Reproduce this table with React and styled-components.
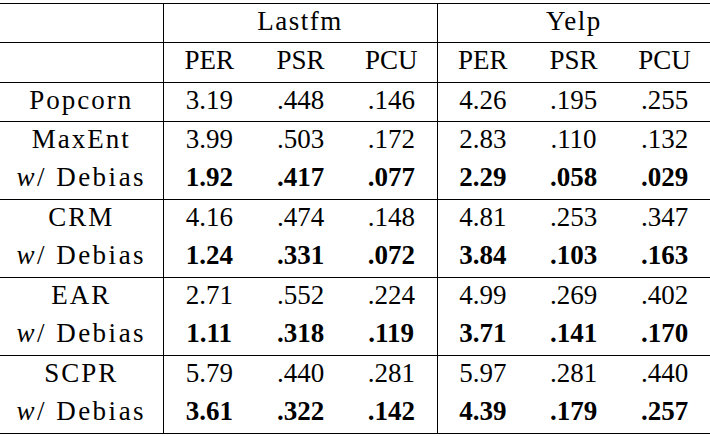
import React from 'react';
import styled, { createGlobalStyle } from 'styled-components';

const GlobalStyle = createGlobalStyle`
  html, body {
    margin: 0;
    padding: 0;
    background: #fff;
  }
`;

const Page = styled.div`
  width: 710px;
  height: 436px;
  padding-top: 3px;
  box-sizing: border-box;
  background: #fff;
`;

const Table = styled.table`
  width: 710px;
  border-collapse: collapse;
  table-layout: fixed;
  font-family: "Liberation Serif", "DejaVu Serif", serif;
  font-size: 27px;
  color: #000;
`;

const Row = styled.tr`
  height: ${(p) => p.$h || 39}px;
  border-top: ${(p) => (p.$rule ? '1px solid #000' : 'none')};
  &:last-child {
    border-bottom: 1px solid #000;
  }
`;

const Cell = styled.td`
  padding: 0 0 4px 0;
  text-align: center;
  vertical-align: middle;
  white-space: nowrap;
  font-weight: ${(p) => (p.$bold ? 700 : 400)};
  border-right: ${(p) => (p.$sep ? '1px solid #000' : 'none')};
`;

const Label = styled(Cell)`
  letter-spacing: ${(p) => (p.$wide ? 2.5 : 2)}px;
`;

const Dataset = styled(Cell)`
  letter-spacing: 1.5px;
`;

const Em = styled.i`
  font-style: italic;
`;

const rows = [
  { name: 'Popcorn', vals: ['3.19', '.448', '.146', '4.26', '.195', '.255'], rule: true },
  { name: 'MaxEnt', vals: ['3.99', '.503', '.172', '2.83', '.110', '.132'], rule: true },
  { debias: true, vals: ['1.92', '.417', '.077', '2.29', '.058', '.029'] },
  { name: 'CRM', vals: ['4.16', '.474', '.148', '4.81', '.253', '.347'], rule: true },
  { debias: true, vals: ['1.24', '.331', '.072', '3.84', '.103', '.163'] },
  { name: 'EAR', vals: ['2.71', '.552', '.224', '4.99', '.269', '.402'], rule: true },
  { debias: true, vals: ['1.11', '.318', '.119', '3.71', '.141', '.170'] },
  { name: 'SCPR', vals: ['5.79', '.440', '.281', '5.97', '.281', '.440'], rule: true },
  { debias: true, vals: ['3.61', '.322', '.142', '4.39', '.179', '.257'] },
];

const metrics = ['PER', 'PSR', 'PCU'];

export default function App() {
  return (
    <Page>
      <GlobalStyle />
      <Table>
        <colgroup>
          <col style={{ width: 163 }} />
          <col style={{ width: 92 }} />
          <col style={{ width: 91 }} />
          <col style={{ width: 91 }} />
          <col style={{ width: 91 }} />
          <col style={{ width: 91 }} />
          <col style={{ width: 91 }} />
        </colgroup>
        <tbody>
          <Row $rule>
            <Cell $sep />
            <Dataset colSpan={3} $sep>Lastfm</Dataset>
            <Dataset colSpan={3}>Yelp</Dataset>
          </Row>
          <Row $rule $h={40}>
            <Cell $sep />
            {metrics.map((m, i) => (
              <Cell key={'l' + m} $sep={i === 2}>{m}</Cell>
            ))}
            {metrics.map((m) => (
              <Cell key={'y' + m}>{m}</Cell>
            ))}
          </Row>
          {rows.map((r, idx) => (
            <Row key={idx} $rule={r.rule}>
              <Label $sep $wide={r.debias}>
                {r.debias ? (
                  <>
                    <Em>w</Em>/ Debias
                  </>
                ) : (
                  r.name
                )}
              </Label>
              {r.vals.map((v, i) => (
                <Cell key={i} $bold={r.debias} $sep={i === 2}>
                  {v}
                </Cell>
              ))}
            </Row>
          ))}
        </tbody>
      </Table>
    </Page>
  );
}
